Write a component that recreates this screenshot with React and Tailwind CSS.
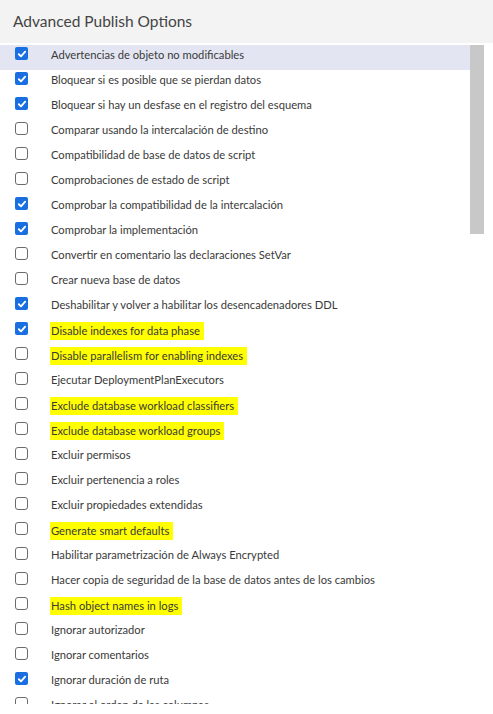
import React from 'react';

const options = [
  { label: 'Advertencias de objeto no modificables', checked: true },
  { label: 'Bloquear si es posible que se pierdan datos', checked: true },
  { label: 'Bloquear si hay un desfase en el registro del esquema', checked: true },
  { label: 'Comparar usando la intercalación de destino', checked: false },
  { label: 'Compatibilidad de base de datos de script', checked: false },
  { label: 'Comprobaciones de estado de script', checked: false },
  { label: 'Comprobar la compatibilidad de la intercalación', checked: true },
  { label: 'Comprobar la implementación', checked: true },
  { label: 'Convertir en comentario las declaraciones SetVar', checked: false },
  { label: 'Crear nueva base de datos', checked: false },
  { label: 'Deshabilitar y volver a habilitar los desencadenadores DDL', checked: true },
  { label: 'Disable indexes for data phase', checked: true, mark: true },
  { label: 'Disable parallelism for enabling indexes', checked: false, mark: true },
  { label: 'Ejecutar DeploymentPlanExecutors', checked: false },
  { label: 'Exclude database workload classifiers', checked: false, mark: true },
  { label: 'Exclude database workload groups', checked: false, mark: true },
  { label: 'Excluir permisos', checked: false },
  { label: 'Excluir pertenencia a roles', checked: false },
  { label: 'Excluir propiedades extendidas', checked: false },
  { label: 'Generate smart defaults', checked: false, mark: true },
  { label: 'Habilitar parametrización de Always Encrypted', checked: false },
  { label: 'Hacer copia de seguridad de la base de datos antes de los cambios', checked: false },
  { label: 'Hash object names in logs', checked: false, mark: true },
  { label: 'Ignorar autorizador', checked: false },
  { label: 'Ignorar comentarios', checked: false },
  { label: 'Ignorar duración de ruta', checked: true },
  { label: 'Ignorar el orden de las columnas', checked: false },
];

function Checkbox({ checked }) {
  if (checked) {
    return (
      <span className="mt-[2px] flex h-[13px] w-[13px] shrink-0 items-center justify-center rounded-[2px] bg-[#1a6fe0]">
        <svg viewBox="0 0 12 12" className="h-[10px] w-[10px]">
          <path d="M2.2 6.3 L4.8 8.8 L9.8 3.2" fill="none" stroke="white" strokeWidth="2.2" strokeLinecap="round" strokeLinejoin="round" />
        </svg>
      </span>
    );
  }
  return <span className="mt-[2px] h-[13px] w-[13px] shrink-0 rounded-[3px] border border-[#6b6b6b] bg-white" />;
}

function OptionRow({ label, checked, mark, active }) {
  return (
    <div className={`flex h-[25px] items-start pl-[15px] ${active ? 'bg-[#e3e6f2]' : ''}`}>
      <Checkbox checked={checked} />
      {mark ? (
        <span className="ml-[22px] mt-[2px] bg-[#ffff00] pr-[4px] pl-[1px] text-[11.2px] leading-[18px] text-[#3a3a3a]">
          {label}
        </span>
      ) : (
        <span className="ml-[23px] text-[11.2px] leading-[20px] text-[#3a3a3a]">{label}</span>
      )}
    </div>
  );
}

export default function App() {
  return (
    <div className="h-[714px] w-[493px] overflow-hidden bg-white" style={{ fontFamily: 'Lato, "Open Sans", sans-serif' }}>
      <div className="flex h-[43px] items-center bg-[#f3f3f3] px-[13px]">
        <h1 className="text-[15.5px] text-[#444444]">Advanced Publish Options</h1>
      </div>
      <div className="mt-[2px] flex h-[659px] overflow-hidden">
        <div className="w-[470px] overflow-hidden whitespace-nowrap">
          {options.map((o, i) => (
            <OptionRow key={o.label} {...o} active={i === 0} />
          ))}
        </div>
        <div className="w-[14px]">
          <div className="h-[189px] bg-[#c8c8c8]" />
        </div>
      </div>
    </div>
  );
}
